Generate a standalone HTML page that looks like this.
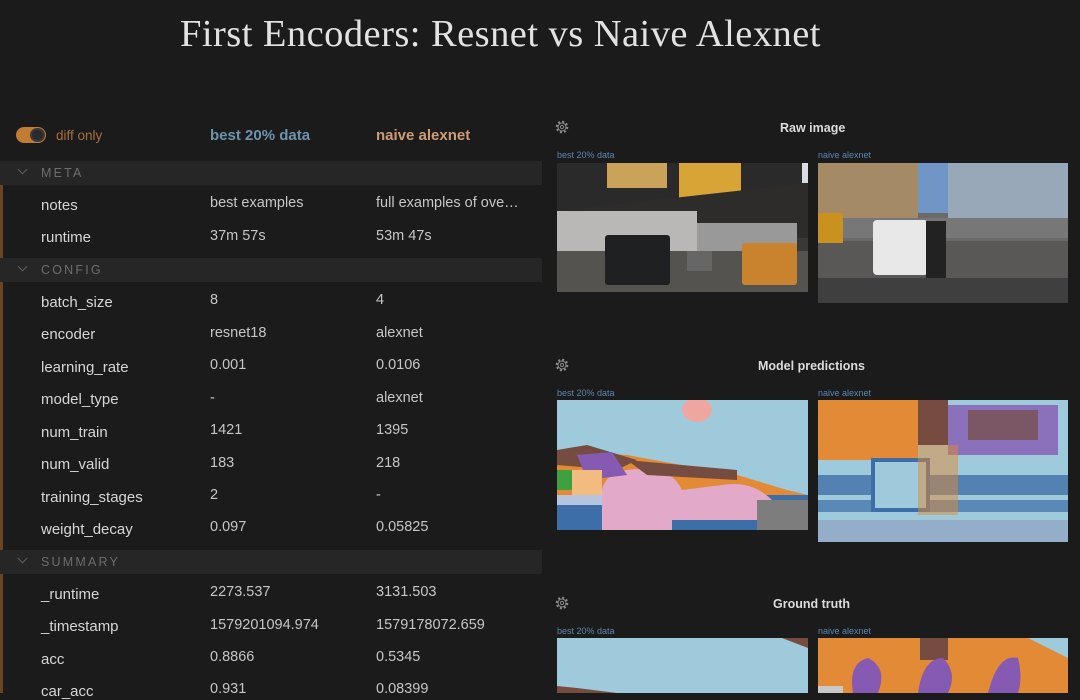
<!DOCTYPE html>
<html><head><meta charset="utf-8"><style>
*{margin:0;padding:0;box-sizing:border-box}
body{width:1080px;height:693px;background:#1b1b1c;overflow:hidden;position:relative;font-family:"Liberation Sans",sans-serif;}
.t{position:absolute;white-space:nowrap}
h1{position:absolute;left:180px;top:12px;font-family:"Liberation Serif",serif;font-weight:normal;font-size:38.5px;color:#e2e2e2;letter-spacing:0.45px}
.sec{position:absolute;left:0;width:542px;height:24px;background:#262627}
.sec span{position:absolute;left:41px;top:5px;font-size:12.5px;letter-spacing:2.2px;color:#6d6d6e}
.sec i{position:absolute;left:19px;top:5px;width:7px;height:7px;border-right:1.5px solid #5f5f60;border-bottom:1.5px solid #5f5f60;transform:rotate(45deg)}
.bar{position:absolute;left:0;width:3px;background:#6a4524}
.k{font-size:15px;color:#d6d6d6}
.v{font-size:14.5px;color:#c6c6c6}
.lbl{position:absolute;font-size:9px;color:#5c86b0}
.ttl{position:absolute;font-size:12.5px;font-weight:bold;color:#dcdcdc}
svg{position:absolute}
</style></head><body>
<h1>First Encoders: Resnet vs Naive Alexnet</h1>

<div class="t" style="left:16px;top:127px;width:30px;height:16px;border-radius:8px;background:#c07d31"></div>
<div class="t" style="left:30px;top:128px;width:15px;height:14px;border-radius:7px;background:#2a2a2a;border:2px solid #3a3a3a"></div>
<div class="t" style="left:56px;top:128px;font-size:13.5px;color:#a4703b">diff only</div>
<div class="t" style="left:210px;top:127px;font-size:15px;font-weight:bold;color:#6f93ad">best 20% data</div>
<div class="t" style="left:376px;top:127px;font-size:15px;font-weight:bold;color:#cf9c77">naive alexnet</div>

<div class="sec" style="top:161px"><i></i><span>META</span></div>
<div class="bar" style="top:185px;height:73px"></div>
<div class="t k" style="left:41px;top:197px">notes</div><div class="t v" style="left:210px;top:195px">best examples</div><div class="t v" style="left:376px;top:195px">full examples of ove…</div>
<div class="t k" style="left:41px;top:229px">runtime</div><div class="t v" style="left:210px;top:228px">37m 57s</div><div class="t v" style="left:376px;top:228px">53m 47s</div>

<div class="sec" style="top:258px"><i></i><span>CONFIG</span></div>
<div class="bar" style="top:282px;height:268px"></div>
<div class="t k" style="left:41px;top:294px">batch_size</div><div class="t v" style="left:210px;top:292px">8</div><div class="t v" style="left:376px;top:292px">4</div>
<div class="t k" style="left:41px;top:326px">encoder</div><div class="t v" style="left:210px;top:325px">resnet18</div><div class="t v" style="left:376px;top:325px">alexnet</div>
<div class="t k" style="left:41px;top:359px">learning_rate</div><div class="t v" style="left:210px;top:357px">0.001</div><div class="t v" style="left:376px;top:357px">0.0106</div>
<div class="t k" style="left:41px;top:391px">model_type</div><div class="t v" style="left:210px;top:390px">-</div><div class="t v" style="left:376px;top:390px">alexnet</div>
<div class="t k" style="left:41px;top:424px">num_train</div><div class="t v" style="left:210px;top:422px">1421</div><div class="t v" style="left:376px;top:422px">1395</div>
<div class="t k" style="left:41px;top:456px">num_valid</div><div class="t v" style="left:210px;top:455px">183</div><div class="t v" style="left:376px;top:455px">218</div>
<div class="t k" style="left:41px;top:489px">training_stages</div><div class="t v" style="left:210px;top:487px">2</div><div class="t v" style="left:376px;top:487px">-</div>
<div class="t k" style="left:41px;top:521px">weight_decay</div><div class="t v" style="left:210px;top:519px">0.097</div><div class="t v" style="left:376px;top:519px">0.05825</div>

<div class="sec" style="top:550px"><i></i><span>SUMMARY</span></div>
<div class="bar" style="top:574px;height:119px"></div>
<div class="t k" style="left:41px;top:586px">_runtime</div><div class="t v" style="left:210px;top:584px">2273.537</div><div class="t v" style="left:376px;top:584px">3131.503</div>
<div class="t k" style="left:41px;top:618px">_timestamp</div><div class="t v" style="left:210px;top:617px">1579201094.974</div><div class="t v" style="left:376px;top:617px">1579178072.659</div>
<div class="t k" style="left:41px;top:651px">acc</div><div class="t v" style="left:210px;top:649px">0.8866</div><div class="t v" style="left:376px;top:649px">0.5345</div>
<div class="t k" style="left:41px;top:683px">car_acc</div><div class="t v" style="left:210px;top:681px">0.931</div><div class="t v" style="left:376px;top:681px">0.08399</div>

<!-- gear icons -->
<svg style="left:554px;top:119px" width="16" height="16" viewBox="0 0 16 16"><circle cx="8" cy="8" r="5.2" fill="none" stroke="#8a8a8a" stroke-width="2.2" stroke-dasharray="2 2.08"/><circle cx="8" cy="8" r="4" fill="none" stroke="#8a8a8a" stroke-width="1"/><circle cx="8" cy="8" r="1.6" fill="none" stroke="#8a8a8a" stroke-width="1"/></svg>
<svg style="left:554px;top:357px" width="16" height="16" viewBox="0 0 16 16"><circle cx="8" cy="8" r="5.2" fill="none" stroke="#8a8a8a" stroke-width="2.2" stroke-dasharray="2 2.08"/><circle cx="8" cy="8" r="4" fill="none" stroke="#8a8a8a" stroke-width="1"/><circle cx="8" cy="8" r="1.6" fill="none" stroke="#8a8a8a" stroke-width="1"/></svg>
<svg style="left:554px;top:595px" width="16" height="16" viewBox="0 0 16 16"><circle cx="8" cy="8" r="5.2" fill="none" stroke="#8a8a8a" stroke-width="2.2" stroke-dasharray="2 2.08"/><circle cx="8" cy="8" r="4" fill="none" stroke="#8a8a8a" stroke-width="1"/><circle cx="8" cy="8" r="1.6" fill="none" stroke="#8a8a8a" stroke-width="1"/></svg>

<div class="ttl" style="left:780px;top:121px">Raw image</div>
<div class="ttl" style="left:758px;top:359px">Model predictions</div>
<div class="ttl" style="left:773px;top:597px">Ground truth</div>

<div class="lbl" style="left:557px;top:150px">best 20% data</div><div class="lbl" style="left:818px;top:150px">naive alexnet</div>
<div class="lbl" style="left:557px;top:388px">best 20% data</div><div class="lbl" style="left:818px;top:388px">naive alexnet</div>
<div class="lbl" style="left:557px;top:626px">best 20% data</div><div class="lbl" style="left:818px;top:626px">naive alexnet</div>

<!-- raw left -->
<svg style="left:557px;top:163px" width="251" height="129" viewBox="0 0 251 129">
<rect width="251" height="129" fill="#3a3836"/>
<rect width="251" height="50" fill="#2b2a2a"/>
<rect x="50" y="0" width="60" height="25" fill="#c9a35a"/><rect x="122" y="0" width="62" height="42" fill="#d9a436"/>
<polygon points="0,48 251,20 251,75 0,70" fill="#2e2c2b"/>
<rect x="0" y="48" width="140" height="40" fill="#b9b8b7"/><rect x="140" y="60" width="100" height="30" fill="#999"/>
<rect x="0" y="88" width="251" height="41" fill="#555350"/>
<rect x="48" y="72" width="65" height="50" fill="#1e2022" rx="3"/>
<rect x="185" y="80" width="55" height="42" fill="#c9822e" rx="3"/>
<rect x="130" y="88" width="25" height="20" fill="#666"/>
<rect x="245" y="0" width="6" height="20" fill="#d8dde4"/>
</svg>
<!-- raw right -->
<svg style="left:818px;top:163px" width="250" height="140" viewBox="0 0 250 140">
<rect width="250" height="140" fill="#6b6a69"/>
<rect width="100" height="60" fill="#a58a66"/><rect x="100" width="30" height="50" fill="#6f96c6"/>
<rect x="130" y="0" width="120" height="60" fill="#98a8b8"/>
<rect x="0" y="55" width="250" height="20" fill="#777"/>
<rect x="0" y="78" width="250" height="62" fill="#5a5857"/>
<rect x="0" y="50" width="25" height="30" fill="#c9921f"/>
<rect x="55" y="57" width="55" height="55" fill="#e8e8e8" rx="4"/>
<rect x="108" y="58" width="20" height="60" fill="#222"/>
<rect x="0" y="115" width="250" height="25" fill="#403f3f"/>
</svg>
<!-- pred left -->
<svg style="left:557px;top:400px" width="251" height="130" viewBox="0 0 251 130">
<rect width="251" height="130" fill="#9fcadb"/>
<polygon points="0,50 70,55 180,75 230,90 251,95 251,130 0,130" fill="#e28a35"/>
<rect x="0" y="95" width="251" height="35" fill="#3e6ea8"/>
<rect x="0" y="95" width="50" height="10" fill="#b5c5e0"/>
<path d="M45,90 q5,-25 50,-20 q20,0 30,20 l40,-5 q30,-5 50,15 l0,20 l-100,0 l0,10 l-70,0z" fill="#e3a9c9"/>
<polygon points="0,50 30,45 80,60 60,70 0,65" fill="#754c3f"/>
<polygon points="20,55 55,52 70,75 30,80" fill="#8659b3"/>
<rect x="0" y="70" width="20" height="20" fill="#3fa03f"/><rect x="15" y="70" width="30" height="25" fill="#f2bb7f"/>
<polygon points="70,60 180,70 180,80 90,75" fill="#754c3f"/>
<rect x="200" y="100" width="51" height="30" fill="#7d7d7d"/>
<ellipse cx="140" cy="10" rx="15" ry="12" fill="#f0a6a0"/>
</svg>
<!-- pred right -->
<svg style="left:818px;top:400px" width="250" height="142" viewBox="0 0 250 142">
<rect width="250" height="142" fill="#9fcadb"/>
<rect width="100" height="60" fill="#e28a35"/>
<rect x="100" y="0" width="30" height="45" fill="#754c3f"/>
<rect x="130" y="5" width="110" height="50" fill="#8659b3" opacity=".8"/>
<rect x="150" y="10" width="70" height="30" fill="#754c3f" opacity=".7"/>
<rect x="0" y="75" width="250" height="20" fill="#3e6ea8" opacity=".8"/>
<rect x="0" y="100" width="250" height="12" fill="#3e6ea8" opacity=".7"/>
<rect x="55" y="60" width="55" height="50" fill="#9fcadb" stroke="#3e6ea8" stroke-width="4"/>
<rect x="0" y="120" width="250" height="22" fill="#8a8fb8" opacity=".5"/>
<rect x="100" y="45" width="40" height="70" fill="#e28a35" opacity=".5"/>
</svg>
<!-- gt left -->
<svg style="left:557px;top:638px" width="251" height="55" viewBox="0 0 251 55">
<rect width="251" height="55" fill="#9fcadb"/>
<polygon points="225,0 251,0 251,10" fill="#754c3f"/>
<polygon points="0,48 20,50 60,55 0,55" fill="#754c3f"/>
</svg>
<!-- gt right -->
<svg style="left:818px;top:638px" width="250" height="55" viewBox="0 0 250 55">
<rect width="250" height="55" fill="#e28a35"/>
<rect x="102" y="0" width="28" height="22" fill="#754c3f"/>
<polygon points="210,0 250,0 250,20" fill="#9fcadb"/>
<path d="M35,55 q-5,-30 15,-35 q20,10 10,35z" fill="#8659b3"/>
<path d="M100,55 q5,-35 25,-35 q15,15 5,35z" fill="#8659b3"/>
<path d="M170,55 q10,-40 30,-35 q5,20 0,35z" fill="#8659b3"/>
<rect x="0" y="48" width="25" height="7" fill="#c8c8c8"/>
</svg>
</body></html>
